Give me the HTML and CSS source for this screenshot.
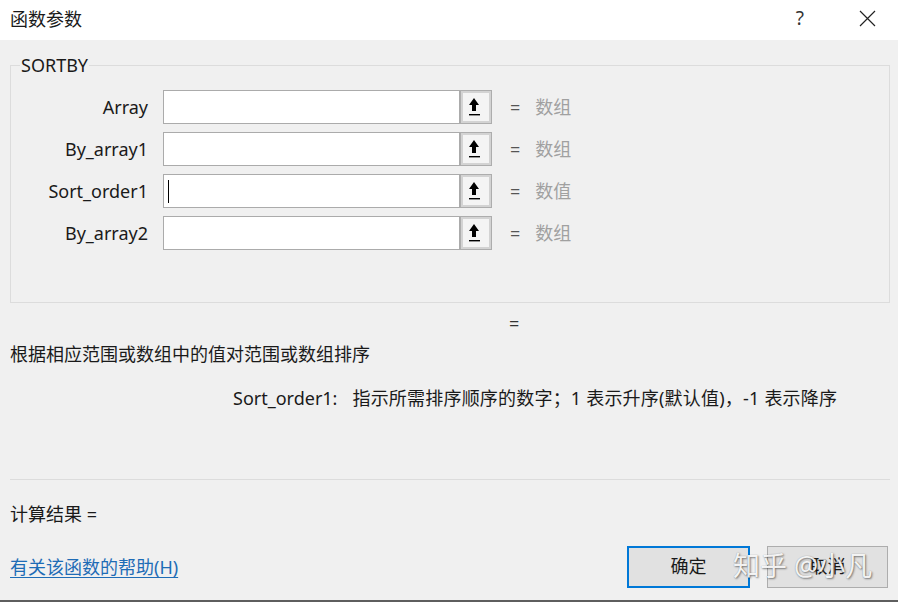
FILE: index.html
```html
<!DOCTYPE html>
<html lang="zh-CN">
<head>
<meta charset="utf-8">
<title>函数参数</title>
<link rel="stylesheet" href="styles.css">
</head>
<body>
<div class="dialog">
  <div class="titlebar">
    <span class="title">函数参数</span>
    <span class="help">?</span>
    <span class="close"><svg width="17" height="17" viewBox="0 0 17 17"><path d="M1 1L16 16M16 1L1 16" stroke="#222" stroke-width="1.2" fill="none"/></svg></span>
  </div>
  <div class="content">
    <div class="group">
      <span class="legend">SORTBY</span>
      <div class="row">
        <span class="label">Array</span>
        <div class="field"></div>
        <div class="pick"><svg width="14" height="20" viewBox="0 0 14 20"><path d="M6 1L1 8H4V14H8V8H11Z" fill="#000"/><rect x="1" y="17" width="11" height="1.4" fill="#000"/></svg></div>
        <span class="eq">=</span>
        <span class="hint">数组</span>
      </div>
      <div class="row">
        <span class="label">By_array1</span>
        <div class="field"></div>
        <div class="pick"><svg width="14" height="20" viewBox="0 0 14 20"><path d="M6 1L1 8H4V14H8V8H11Z" fill="#000"/><rect x="1" y="17" width="11" height="1.4" fill="#000"/></svg></div>
        <span class="eq">=</span>
        <span class="hint">数组</span>
      </div>
      <div class="row">
        <span class="label">Sort_order1</span>
        <div class="field"><span class="caret"></span></div>
        <div class="pick"><svg width="14" height="20" viewBox="0 0 14 20"><path d="M6 1L1 8H4V14H8V8H11Z" fill="#000"/><rect x="1" y="17" width="11" height="1.4" fill="#000"/></svg></div>
        <span class="eq">=</span>
        <span class="hint">数值</span>
      </div>
      <div class="row">
        <span class="label">By_array2</span>
        <div class="field"></div>
        <div class="pick"><svg width="14" height="20" viewBox="0 0 14 20"><path d="M6 1L1 8H4V14H8V8H11Z" fill="#000"/><rect x="1" y="17" width="11" height="1.4" fill="#000"/></svg></div>
        <span class="eq">=</span>
        <span class="hint">数组</span>
      </div>
    </div>
    <div class="result-eq">=</div>
    <div class="desc">根据相应范围或数组中的值对范围或数组排序</div>
    <div class="param-desc"><span class="pname">Sort_order1:</span>指示所需排序顺序的数字；1 表示升序(默认值)，-1 表示降序</div>
    <div class="sep"></div>
    <div class="calc">计算结果 =</div>
    <div class="footer">
      <a class="helplink" href="#">有关该函数的帮助(H)</a>
      <div class="buttons">
        <button class="btn primary">确定</button>
        <button class="btn">取消</button>
      </div>
      <span class="watermark">知乎 @小凡</span>
    </div>
  </div>
</div>
</body>
</html>
```

FILE: styles.css
```css
* { box-sizing: border-box; }
html, body { margin: 0; padding: 0; }
body {
  width: 898px;
  height: 602px;
  overflow: hidden;
  font-family: "Noto Sans", "Noto Sans CJK SC", sans-serif;
  font-size: 18px;
  color: #1a1a1a;
  background: #f0f0f0;
}
.dialog {
  width: 898px;
  height: 602px;
  display: flex;
  flex-direction: column;
  border-bottom: 2px solid #5e5e5e;
}
.titlebar {
  height: 40px;
  background: #fff;
  display: flex;
  align-items: center;
  padding-left: 10px;
  flex: none;
}
.title { font-size: 18px; line-height: 24px; margin-top: -2px; }
.help {
  margin-left: auto;
  font-size: 19px;
  color: #333;
  margin-top: -4px;
}
.close {
  display: flex;
  margin-left: 55px;
  margin-right: 22px;
  margin-top: -4px;
}
.content {
  flex: 1;
  display: flex;
  flex-direction: column;
  background: #f0f0f0;
}
.group {
  position: relative;
  margin: 25px 8px 0 10px;
  height: 238px;
  border: 1px solid #dcdcdc;
  padding-top: 24px;
  display: flex;
  flex-direction: column;
  gap: 8px;
}
.legend {
  position: absolute;
  left: 9px;
  top: -13px;
  padding: 0 1px;
  line-height: 24px;
  background: #f0f0f0;
  color: #1a1a1a;
}
.row {
  display: flex;
  align-items: center;
  height: 34px;
}
.label {
  width: 137px;
  text-align: right;
  margin-right: 15px;
  line-height: 24px;
}
.field {
  width: 297px;
  height: 34px;
  background: #fff;
  border: 1px solid #ababab;
  display: flex;
  align-items: center;
  padding-left: 4px;
}
.caret {
  display: block;
  width: 1px;
  height: 23px;
  background: #000;
}
.pick {
  width: 32px;
  height: 34px;
  background: #f4f4f4;
  border: 1px solid #adadad;
  box-shadow: inset 0 0 0 2px #d3d3d3;
  display: flex;
  align-items: center;
  justify-content: center;
  padding-right: 2px;
}
.eq {
  margin-left: 18px;
  color: #555;
  line-height: 24px;
}
.hint {
  margin-left: 15px;
  color: #a0a0a0;
  line-height: 24px;
}
.result-eq {
  margin-top: 8px;
  padding-left: 509px;
  line-height: 24px;
  color: #333;
}
.desc {
  margin-top: 7px;
  padding-left: 10px;
  line-height: 24px;
}
.param-desc {
  margin-top: 20px;
  padding-left: 233px;
  line-height: 24px;
  letter-spacing: 0.2px;
}
.pname { margin-right: 15px; letter-spacing: 0; }
.sep {
  margin: 69px 8px 0 10px;
  border-top: 1px solid #dcdcdc;
}
.calc {
  margin-top: 22px;
  padding-left: 10px;
  line-height: 24px;
}
.footer {
  position: relative;
  margin-top: 20px;
  display: flex;
  align-items: center;
  padding: 0 10px;
  height: 42px;
}
.helplink {
  color: #1e6cb6;
  text-decoration: underline;
  text-underline-offset: 3px;
  line-height: 24px;
}
.buttons {
  margin-left: auto;
  display: flex;
  gap: 17px;
}
.btn {
  font-family: inherit;
  font-size: 18px;
  line-height: 24px;
  color: #1a1a1a;
  width: 121px;
  height: 42px;
  background: #e1e1e1;
  border: 1px solid #adadad;
  padding: 0 0 3px;
}
.btn.primary {
  width: 123px;
  border: 2px solid #0078d7;
}
.watermark {
  position: absolute;
  left: 733px;
  top: 2px;
  font-size: 27px;
  line-height: 36px;
  color: rgba(255, 255, 255, 0.92);
  text-shadow: 1px 1px 2px rgba(0, 0, 0, 0.45), 0 0 1px rgba(0, 0, 0, 0.3);
  pointer-events: none;
  white-space: nowrap;
}
```
